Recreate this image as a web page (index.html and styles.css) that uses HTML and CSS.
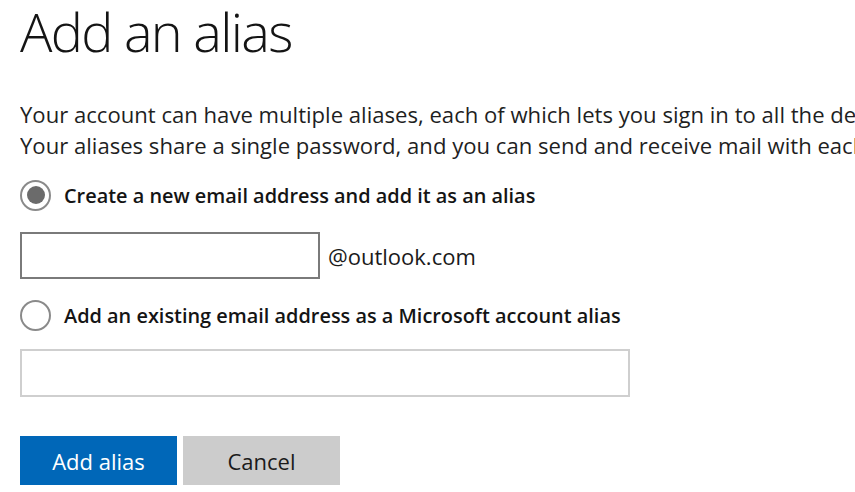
FILE: index.html
```html
<!DOCTYPE html>
<html>
<head>
<meta charset="utf-8">
<link rel="stylesheet" href="styles.css">
</head>
<body>
<div class="page">
  <h1 class="title">Add an alias</h1>
  <p class="intro">Your account can have multiple aliases, each of which lets you sign in to all the devices and services that use your Microsoft account.<br>Your aliases share a single password, and you can send and receive mail with each of them.</p>
  <label class="option option-first">
    <span class="radio"><span class="dot"></span></span>
    <span class="option-text">Create a new email address and add it as an alias</span>
  </label>
  <div class="field-row field-first">
    <input class="input input-dark" type="text">
    <span class="suffix">@outlook.com</span>
  </div>
  <label class="option option-second">
    <span class="radio"></span>
    <span class="option-text">Add an existing email address as a Microsoft account alias</span>
  </label>
  <div class="field-row field-second">
    <input class="input input-light" type="text">
  </div>
  <div class="buttons">
    <button class="btn btn-primary">Add alias</button>
    <button class="btn btn-secondary">Cancel</button>
  </div>
</div>
</body>
</html>
```
FILE: styles.css
```css
html, body {
  margin: 0;
  padding: 0;
  background: #fff;
  overflow: hidden;
}
body {
  font-family: "Open Sans", "Noto Sans", sans-serif;
  color: #000;
  width: 855px;
  height: 492px;
}
.page {
  padding: 0 0 0 20px;
  white-space: nowrap;
}
.title {
  margin: 0;
  font-weight: 300;
  font-size: 54px;
  line-height: 62px;
  letter-spacing: -1.7px;
  color: #141414;
}
.intro {
  margin: 37px 0 0 0;
  font-size: 22.1px;
  line-height: 31px;
  color: #1f1f1f;
  width: 835px;
  overflow: hidden;
}
.option {
  display: flex;
  align-items: center;
  gap: 13px;
  height: 32px;
}
.option-first {
  margin-top: 18px;
}
.option-second {
  margin-top: 20px;
}
.radio {
  width: 27px;
  height: 27px;
  border: 2px solid #8a8a8a;
  border-radius: 50%;
  display: flex;
  align-items: center;
  justify-content: center;
  flex: none;
}
.dot {
  width: 18px;
  height: 18px;
  border-radius: 50%;
  background: #6b6b6b;
}
.option-text {
  font-size: 19.9px;
  font-weight: 600;
  color: #141414;
}
.field-row {
  display: flex;
  align-items: center;
  gap: 8px;
}
.field-first {
  margin-top: 21px;
}
.field-second {
  margin-top: 18px;
}
.input {
  box-sizing: border-box;
  height: 47px;
  border: 2px solid #7a7a7a;
  background: #fff;
  outline: none;
  padding: 0;
}
.input-dark {
  width: 300px;
}
.input-light {
  width: 610px;
  height: 48px;
  border-color: #cfcfcf;
}
.suffix {
  font-size: 22px;
  color: #1a1a1a;
}
.buttons {
  display: flex;
  gap: 6px;
  margin-top: 39px;
}
.btn {
  width: 157px;
  height: 49px;
  border: none;
  font-family: "Open Sans", "Noto Sans", sans-serif;
  font-size: 22px;
  padding: 0;
}
.btn-primary {
  background: #0067b8;
  color: #fff;
}
.btn-secondary {
  background: #cccccc;
  color: #1a1a1a;
}
```
